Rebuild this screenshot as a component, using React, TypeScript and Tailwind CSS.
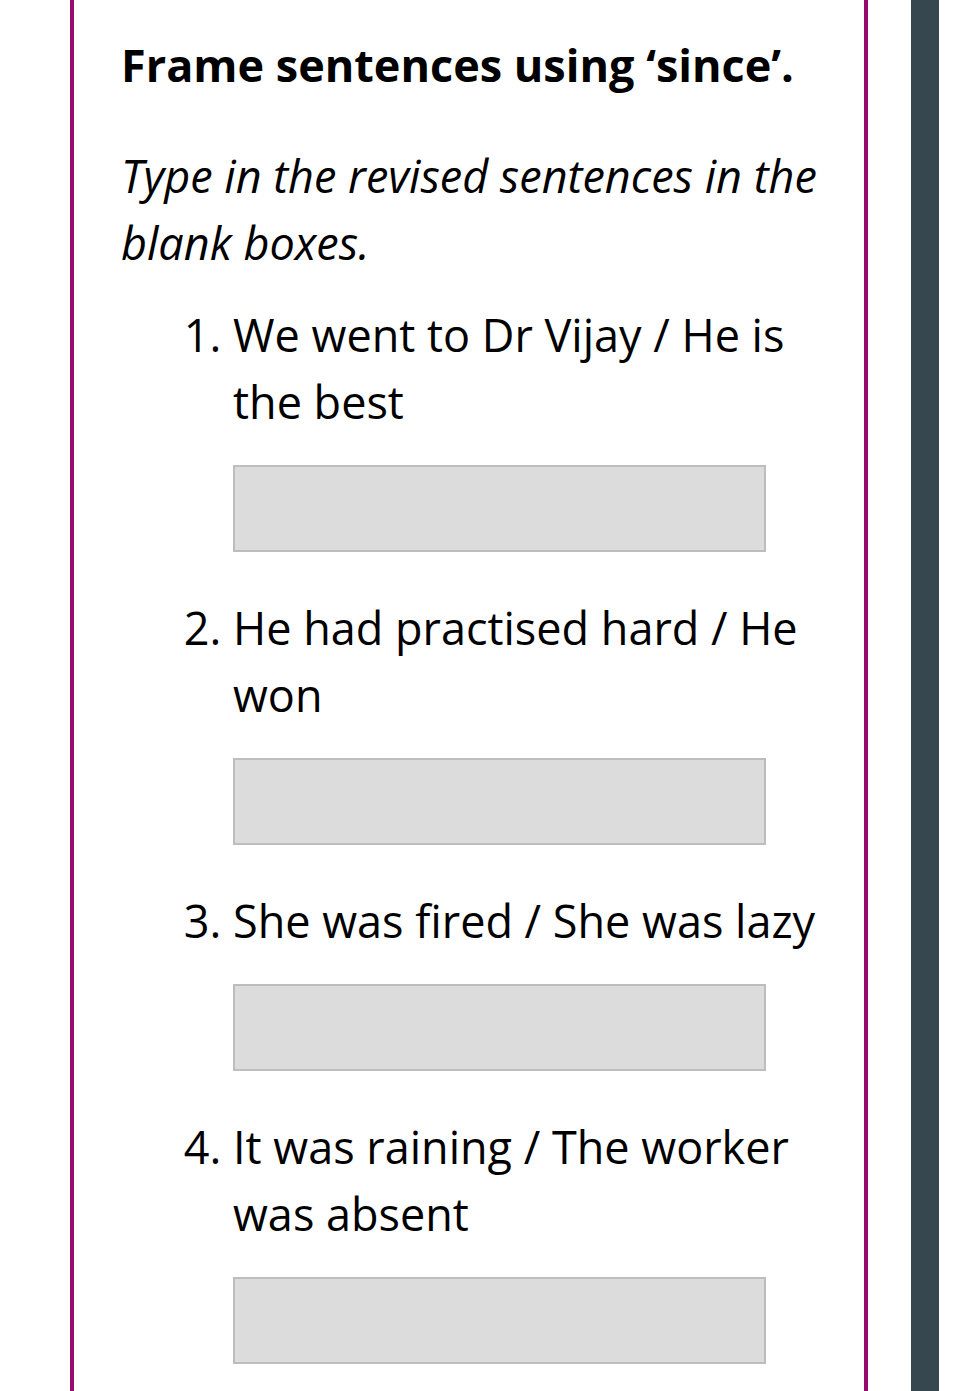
const items = [
  'We went to Dr Vijay / He is the best',
  'He had practised hard / He won',
  'She was fired / She was lazy',
  'It was raining / The worker was absent',
]

export default function App() {
  return (
    <div className="min-h-[1391px] bg-white flex font-['Open_Sans',sans-serif] text-black">
      <div className="ml-[70px] w-[798px] border-x-4 border-[#990a6e] pl-[47px] pr-[36px] pt-[31px] pb-10">
        <h1 className="text-[45px] leading-[67px] font-bold">Frame sentences using ‘since’.</h1>
        <p className="mt-[44px] text-[45px] leading-[67px] italic">
          Type in the revised sentences in the blank boxes.
        </p>
        <ol className="mt-[25px] list-decimal pl-[112px] text-[45px] leading-[67px]">
          {items.map((text, i) => (
            <li key={i} className={i > 0 ? 'mt-[42px]' : ''}>
              {text}
              <div className="mt-[30px] h-[87px] w-[533px] border-2 border-[#bdbdbd] bg-[#dcdcdc]" />
            </li>
          ))}
        </ol>
      </div>
      <div className="ml-[43px] w-[28px] bg-[#37474f]" />
    </div>
  )
}
